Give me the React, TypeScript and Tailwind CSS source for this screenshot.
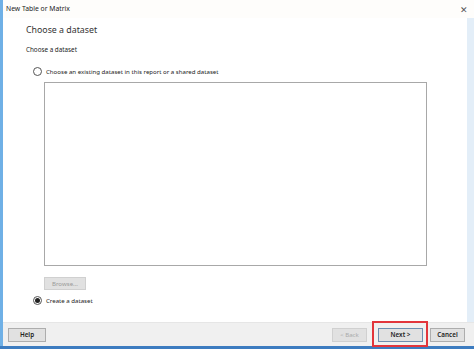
import React from 'react'

function Radio({ checked }: { checked?: boolean }) {
  return (
    <span className="w-[9px] h-[9px] rounded-full border border-[#555] bg-white flex items-center justify-center shrink-0">
      {checked && <span className="w-[5px] h-[5px] rounded-full bg-[#222]" />}
    </span>
  )
}

export default function App() {
  return (
    <div
      className="w-[474px] h-[349px] flex flex-col bg-[#dbeaf7] overflow-hidden"
      style={{ fontFamily: '"Noto Sans", "Open Sans", sans-serif' }}
    >
      <div className="flex-1 flex">
        {/* left frame */}
        <div className="w-[3px] bg-[#6fb0e6]" />

        <div className="flex-1 flex flex-col bg-white">
          {/* Title bar */}
          <div className="h-[18px] flex items-center justify-between pl-[3px] pr-[6px] bg-[#fefdfb]">
            <span className="text-[6.8px] text-[#222]">New Table or Matrix</span>
            <span className="text-[9px] text-[#555] leading-none">✕</span>
          </div>

          <div className="flex-1 flex">
            {/* Content */}
            <div className="flex-1 flex flex-col pl-[23px] pt-[6px]">
              <div className="text-[8.8px] text-[#333]">Choose a dataset</div>
              <div className="text-[6.3px] text-[#222] mt-[8px]">Choose a dataset</div>

              <div className="flex items-center gap-[4px] ml-[7px] mt-[12px]">
                <Radio />
                <span className="text-[6.1px] text-[#222]">
                  Choose an existing dataset in this report or a shared dataset
                </span>
              </div>

              <div className="ml-[18px] mt-[6px] w-[383px] h-[184px] border border-[#a8a8a8] bg-white" />

              <div className="ml-[18px] mt-[11px] w-[42px] h-[13px] bg-[#e1e1e1] border border-[#d0d0d0] flex items-center justify-center text-[6.1px] text-[#999]">
                Browse...
              </div>

              <div className="flex items-center gap-[4px] ml-[7px] mt-[6px]">
                <Radio checked />
                <span className="text-[6.1px] text-[#222]">Create a dataset</span>
              </div>
            </div>
            {/* right frame */}
            <div className="w-[7px] bg-[#e3eef8]" />
          </div>

          {/* Footer */}
          <div className="h-[24px] bg-[#f0f0f0] border-t border-[#e6e6e6] flex items-center pl-[5px] pr-[9px]">
            <div className="w-[38px] h-[14px] bg-[#e1e1e1] border border-[#adadad] flex items-center justify-center text-[6.3px] font-semibold text-[#222]">
              Help
            </div>
            <div className="flex-1" />
            <div className="w-[35px] h-[14px] bg-[#e1e1e1] border border-[#d0d0d0] flex items-center justify-center text-[6.1px] text-[#aaa]">
              &lt; Back
            </div>
            <div className="relative ml-[11px]">
              <div className="w-[45px] h-[14px] bg-[#e1e1e1] border border-[#6f8fb0] flex items-center justify-center text-[6.3px] font-semibold text-[#222]">
                Next &gt;
              </div>
              <div className="absolute -left-[6px] -top-[7px] w-[56px] h-[26px] border-2 border-[#e2363c]" />
            </div>
            <div className="ml-[7px] w-[35px] h-[14px] bg-[#e1e1e1] border border-[#adadad] flex items-center justify-center text-[6.3px] font-semibold text-[#222]">
              Cancel
            </div>
          </div>
        </div>
      </div>
      {/* bottom frame */}
      <div className="h-[3px] bg-[#3d7cc0]" />
    </div>
  )
}
